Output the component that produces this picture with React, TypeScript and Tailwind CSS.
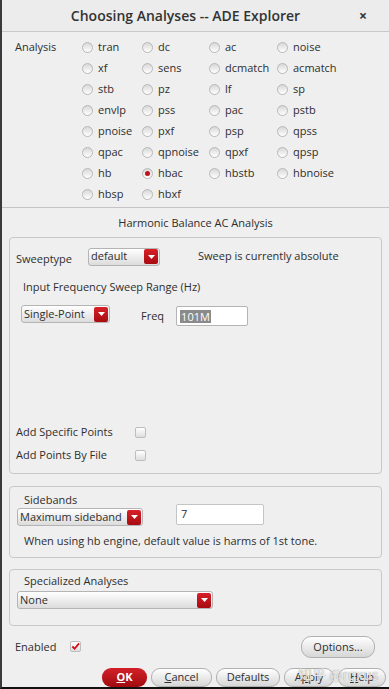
import React from 'react'

const analyses = [
  ['tran', 'dc', 'ac', 'noise'],
  ['xf', 'sens', 'dcmatch', 'acmatch'],
  ['stb', 'pz', 'lf', 'sp'],
  ['envlp', 'pss', 'pac', 'pstb'],
  ['pnoise', 'pxf', 'psp', 'qpss'],
  ['qpac', 'qpnoise', 'qpxf', 'qpsp'],
  ['hb', 'hbac', 'hbstb', 'hbnoise'],
  ['hbsp', 'hbxf'],
]

const Radio = ({ label, on }: { label: string; on?: boolean }) => (
  <div className="flex items-center gap-[5px] h-[21px]">
    <span className="w-[11px] h-[11px] rounded-full border border-[#b8b8b8] bg-gradient-to-b from-[#d8d8d8] to-white flex items-center justify-center">
      {on && <span className="w-[5px] h-[5px] rounded-full bg-[#c0141a]" />}
    </span>
    <span>{label}</span>
  </div>
)

const Arrow = () => (
  <span className="w-[14px] h-[15px] rounded-[2px] bg-gradient-to-b from-[#d82028] to-[#a80a10] flex items-center justify-center">
    <svg width="7" height="4" viewBox="0 0 7 4">
      <path d="M0 0h7L3.5 4z" fill="#fff" />
    </svg>
  </span>
)

const Combo = ({ text, className }: { text: string; className: string }) => (
  <div
    className={`h-[18px] rounded-[3px] border border-[#b4b4b4] bg-gradient-to-b from-white to-[#dcdcdc] flex items-center justify-between pl-[2px] pr-[1px] ${className}`}
  >
    <span>{text}</span>
    <Arrow />
  </div>
)

const Check = ({ on }: { on?: boolean }) => (
  <span className="w-[11px] h-[11px] rounded-[2px] border border-[#bdbdbd] bg-gradient-to-b from-white to-[#dedede] flex items-center justify-center">
    {on && (
      <svg width="10" height="9" viewBox="0 0 10 9">
        <path d="M1.5 4.5l2.5 2.5 5-6" fill="none" stroke="#d0101a" strokeWidth="2" />
      </svg>
    )}
  </span>
)

const Btn = ({ children, className }: { children: React.ReactNode; className: string }) => (
  <div
    className={`h-[19px] rounded-[9px] border border-[#b0b0b0] bg-gradient-to-b from-white to-[#d6d6d6] flex items-center justify-center ${className}`}
  >
    {children}
  </div>
)

export default function App() {
  return (
    <div
      className="w-[389px] h-[689px] bg-[#efefef] text-[11px] text-[#2e2e2e] border-l-2 border-l-[#3a3a3a] border-b-2 border-b-[#111] flex flex-col overflow-hidden relative"
      style={{ fontFamily: '"Open Sans", "Noto Sans", sans-serif' }}
    >
      {/* Title bar */}
      <div className="h-[32px] shrink-0 flex items-center border-b border-[#c8c8c8] bg-[#ececec] relative">
        <div className="flex-1 text-center text-[14px] font-semibold text-[#333] pl-[10px]">
          Choosing Analyses -- ADE Explorer
        </div>
        <div className="w-[30px] text-[14px] font-bold text-[#333]">×</div>
      </div>

      {/* Analysis radios */}
      <div className="flex pt-[5px] pl-[13px] pb-[2px] border-b border-[#c4c4c4]">
        <div className="w-[67px] h-[21px] flex items-center">Analysis</div>
        <div className="grid grid-cols-[60px_67px_68px_auto]">
          {analyses.flatMap((row, r) =>
            row.map((a, c) => <Radio key={`${r}-${c}`} label={a} on={a === 'hbac'} />),
          )}
        </div>
      </div>

      <div className="text-center pt-[7px] pb-[5px]">Harmonic Balance AC Analysis</div>

      {/* Sweep group */}
      <div className="mx-[7px] h-[238px] rounded-[4px] border border-[#c8c8c8] flex flex-col pl-[6px] pr-[6px]">
        <div className="flex items-center mt-[10px] h-[18px]">
          <span className="w-[72px] pt-[6px]">Sweeptype</span>
          <Combo text="default" className="w-[72px]" />
          <span className="ml-[38px]">Sweep is currently absolute</span>
        </div>
        <div className="mt-[13px] pl-[7px]">Input Frequency Sweep Range (Hz)</div>
        <div className="flex items-center mt-[11px] pl-[5px]">
          <Combo text="Single-Point" className="w-[89px] -mt-[4px]" />
          <span className="ml-[31px]">Freq</span>
          <div className="ml-[12px] w-[72px] h-[20px] border border-[#b4b4b4] rounded-[2px] bg-white flex items-center pl-[3px]">
            <span className="bg-[#8a8a8a] text-white leading-[13px] px-[1px]">101M</span>
          </div>
        </div>
        <div className="flex-1" />
        <div className="flex items-center h-[23px]">
          <span className="w-[119px]">Add Specific Points</span>
          <Check />
        </div>
        <div className="flex items-center h-[23px] mb-[6px]">
          <span className="w-[119px]">Add Points By File</span>
          <Check />
        </div>
      </div>

      {/* Sidebands group */}
      <div className="mx-[7px] mt-[12px] h-[72px] rounded-[4px] border border-[#c8c8c8] pl-[7px] pt-[6px]">
        <div className="pl-[7px] leading-[14px]">Sidebands</div>
        <div className="flex items-center">
          <Combo text="Maximum sideband" className="w-[126px] mt-[1px]" />
          <div className="ml-[33px] w-[88px] h-[21px] border border-[#c4c4c4] rounded-[2px] bg-white flex items-center pl-[4px] -mt-[4px]">
            7
          </div>
        </div>
        <div className="pl-[7px] mt-[7px]">When using hb engine, default value is harms of 1st tone.</div>
      </div>

      {/* Specialized group */}
      <div className="mx-[7px] mt-[11px] h-[57px] rounded-[4px] border border-[#c8c8c8] pl-[7px] pt-[4px]">
        <div className="pl-[7px] leading-[14px]">Specialized Analyses</div>
        <Combo text="None" className="w-[196px] mt-[3px]" />
      </div>

      {/* Enabled + Options */}
      <div className="flex items-center mt-[10px] h-[22px] pl-[13px] pr-[14px]">
        <span className="w-[55px]">Enabled</span>
        <Check on />
        <div className="flex-1" />
        <Btn className="w-[74px] h-[22px] rounded-[10px]">Options...</Btn>
      </div>

      {/* Bottom buttons */}
      <div className="flex items-center gap-[4px] pl-[100px] mt-[10px]">
        <div className="w-[45px] h-[19px] rounded-[9px] bg-gradient-to-b from-[#d42028] to-[#a00a10] text-white font-bold flex items-center justify-center">
          <span className="underline">O</span>K
        </div>
        <Btn className="w-[61px]">
          <span className="underline">C</span>ancel
        </Btn>
        <Btn className="w-[64px]">Defaults</Btn>
        <Btn className="w-[50px]">
          A<span className="underline">p</span>ply
        </Btn>
        <Btn className="w-[48px]">
          <span className="underline">H</span>elp
        </Btn>
      </div>

      {/* watermark */}
      <div className="absolute left-[296px] top-[664px] text-[14px] text-white/80 [text-shadow:0_0_1px_#777] pointer-events-none" style={{ fontFamily: '"Noto Sans CJK SC", sans-serif' }}>
        知乎 @rqxus
      </div>
    </div>
  )
}
